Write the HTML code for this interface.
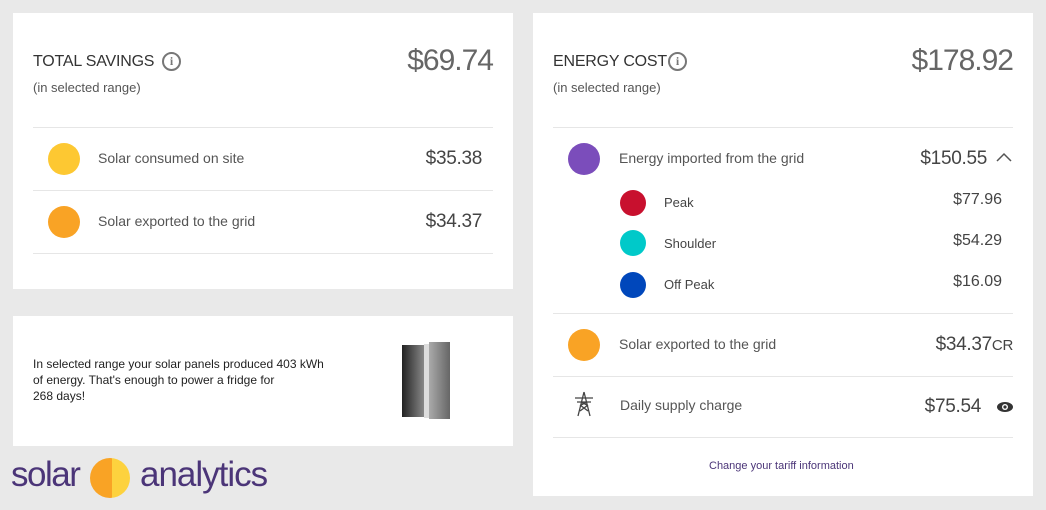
<!DOCTYPE html><html><head><style>
body{margin:0;width:1046px;height:510px;background:#e9e9e9;font-family:"Liberation Sans",sans-serif;color:#444;position:relative;overflow:hidden}
.c{position:absolute;background:#fff}
.a{position:absolute;white-space:nowrap}
.t{font-size:16px;color:#333;letter-spacing:-0.2px}
.s{font-size:13px;color:#555}
.big{font-size:30px;color:#666;letter-spacing:-1px}
.dot{position:absolute;border-radius:50%}
.hr{position:absolute;height:1px;background:#e6e6e6}
.l{font-size:14px;color:#555}
.v{font-size:19px;color:#444;letter-spacing:-0.3px}
.i{position:absolute;width:15px;height:15px;border:2px solid #777;border-radius:50%;font:bold 12px "Liberation Serif",serif;color:#777;text-align:center;line-height:15px}
</style></head><body>
<div class="c" style="left:13px;top:13px;width:500px;height:276px"></div>
<div class="c" style="left:13px;top:316px;width:500px;height:130px"></div>
<div class="c" style="left:533px;top:13px;width:500px;height:483px"></div>

<div class="a t" style="left:33px;top:53px">TOTAL SAVINGS</div>
<div class="i" style="left:162px;top:52px">i</div>
<div class="a s" style="left:33px;top:80px">(in selected range)</div>
<div class="a big" style="right:553px;top:44px">$69.74</div>
<div class="hr" style="left:33px;top:127px;width:460px"></div>
<div class="dot" style="left:48px;top:143px;width:32px;height:32px;background:#fdc832"></div>
<div class="a l" style="left:98px;top:150px">Solar consumed on site</div>
<div class="a v" style="right:564px;top:148px">$35.38</div>
<div class="hr" style="left:33px;top:190px;width:460px"></div>
<div class="dot" style="left:48px;top:206px;width:32px;height:32px;background:#f9a325"></div>
<div class="a l" style="left:98px;top:213px">Solar exported to the grid</div>
<div class="a v" style="right:564px;top:211px">$34.37</div>
<div class="hr" style="left:33px;top:253px;width:460px"></div>

<div class="a" style="left:33px;top:356px;font-size:12px;line-height:16px;color:#222">In selected range your solar panels produced 403 kWh<br>of energy. That's enough to power a fridge for<br>268 days!</div>
<div class="a" style="left:402px;top:345px;width:22px;height:72px;background:linear-gradient(90deg,#222,#888)"></div>
<div class="a" style="left:429px;top:342px;width:21px;height:77px;background:linear-gradient(90deg,#aaa,#666)"></div>
<div class="a" style="left:424px;top:344px;width:5px;height:74px;background:#ddd"></div>

<div class="a" style="left:11px;top:455px;font-size:35px;color:#4b3578;letter-spacing:-1.5px">solar</div>
<div class="dot" style="left:90px;top:458px;width:40px;height:40px;background:linear-gradient(90deg,#f9a325 55%,#fdd23e 55%)"></div>
<div class="a" style="left:140px;top:455px;font-size:35px;color:#4b3578;letter-spacing:-1px">analytics</div>

<div class="a t" style="left:553px;top:53px">ENERGY COST</div>
<div class="i" style="left:668px;top:52px">i</div>
<div class="a s" style="left:553px;top:80px">(in selected range)</div>
<div class="a big" style="right:33px;top:44px">$178.92</div>
<div class="hr" style="left:553px;top:127px;width:460px"></div>
<div class="dot" style="left:568px;top:143px;width:32px;height:32px;background:#7b4dbb"></div>
<div class="a l" style="left:619px;top:150px">Energy imported from the grid</div>
<div class="a v" style="right:59px;top:148px">$150.55</div>
<svg class="a" style="left:995px;top:151px" width="18" height="12"><path d="M2 10 L9 3 L16 10" fill="none" stroke="#555" stroke-width="1.5"/></svg>
<div class="dot" style="left:620px;top:190px;width:26px;height:26px;background:#c8102e"></div>
<div class="a" style="left:664px;top:195px;font-size:13px;color:#444">Peak</div>
<div class="a" style="right:44px;top:191px;font-size:16px;color:#444">$77.96</div>
<div class="dot" style="left:620px;top:230px;width:26px;height:26px;background:#00c9c9"></div>
<div class="a" style="left:664px;top:236px;font-size:13px;color:#444">Shoulder</div>
<div class="a" style="right:44px;top:232px;font-size:16px;color:#444">$54.29</div>
<div class="dot" style="left:620px;top:272px;width:26px;height:26px;background:#0047bb"></div>
<div class="a" style="left:664px;top:277px;font-size:13px;color:#444">Off Peak</div>
<div class="a" style="right:44px;top:273px;font-size:16px;color:#444">$16.09</div>
<div class="hr" style="left:553px;top:313px;width:460px"></div>
<div class="dot" style="left:568px;top:329px;width:32px;height:32px;background:#f9a325"></div>
<div class="a l" style="left:619px;top:336px">Solar exported to the grid</div>
<div class="a v" style="right:33px;top:334px">$34.37<span style="font-size:15px">CR</span></div>
<div class="hr" style="left:553px;top:376px;width:460px"></div>
<svg class="a" style="left:572px;top:391px" width="24" height="26"><g fill="none" stroke="#444" stroke-width="1.3"><path d="M12 1 L6 25 M12 1 L18 25 M3 7 H21 M5 11 H19 M8 14 L16 20 M16 14 L8 20 M9 11 L15 14 M15 11 L9 14"/></g></svg>
<div class="a l" style="left:620px;top:397px">Daily supply charge</div>
<div class="a v" style="right:65px;top:396px">$75.54</div>
<svg class="a" style="left:996px;top:401px" width="18" height="12"><ellipse cx="9" cy="6" rx="8" ry="5" fill="#333"/><circle cx="9" cy="6" r="3" fill="#fff"/><circle cx="9" cy="6" r="1.6" fill="#333"/></svg>
<div class="hr" style="left:553px;top:437px;width:460px"></div>
<div class="a" style="left:709px;top:460px;font-size:11px;color:#4b3578">Change your tariff information</div>
</body></html>
